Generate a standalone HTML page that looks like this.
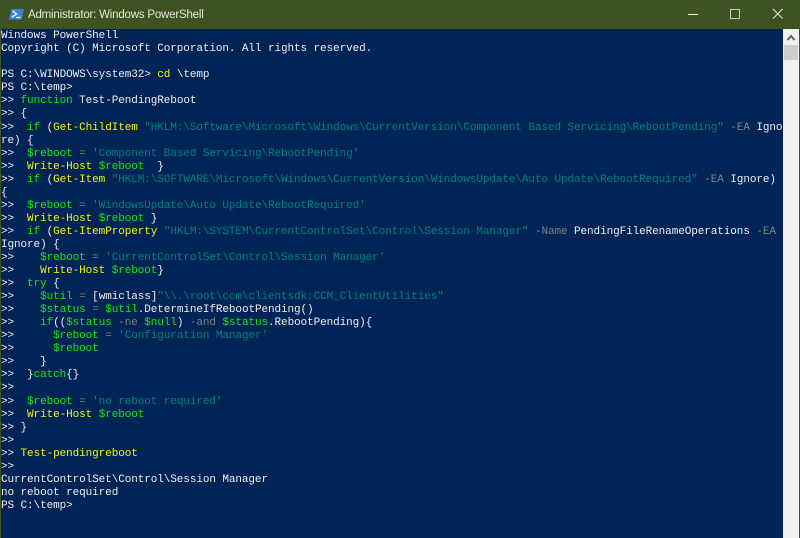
<!DOCTYPE html>
<html><head><meta charset="utf-8"><style>
html,body{margin:0;padding:0;width:800px;height:538px;overflow:hidden;background:#012456}
#tb{position:absolute;left:0;top:0;width:800px;height:29px;background:#3f5322}
#tt{position:absolute;left:28px;top:8px;font:11.500px/15px "Liberation Sans",sans-serif;letter-spacing:-.2px;color:#e4e8dc;white-space:pre}
#lb{position:absolute;left:0;top:29px;width:1px;height:509px;background:#3f5322}
#rb{position:absolute;left:799px;top:0;width:1px;height:538px;background:#3f5322}
#sb{position:absolute;left:783px;top:29px;width:16px;height:509px;background:#f0f0f0}
#th{position:absolute;left:784px;top:45px;width:14px;height:15px;background:#cdcdcd}
pre{position:absolute;left:1px;top:30.200px;margin:0;font:11px/13.040px "Liberation Mono",monospace;letter-spacing:-.09px;color:#eeedf0}
.y{color:#f4f400}.g{color:#10e810}.s{color:#008080}.o{color:#808080}
svg{position:absolute;left:0;top:0}
</style></head><body>
<pre>Windows PowerShell
Copyright (C) Microsoft Corporation. All rights reserved.

PS C:\WINDOWS\system32&gt; <span class="y">cd</span> \temp
PS C:\temp&gt;
&gt;&gt; <span class="g">function</span> Test-PendingReboot
&gt;&gt; {
&gt;&gt;  <span class="g">if</span> (<span class="y">Get-ChildItem</span> <span class="s">"HKLM:\Software\Microsoft\Windows\CurrentVersion\Component Based Servicing\RebootPending"</span> <span class="o">-EA</span> Igno
re) {
&gt;&gt;  <span class="g">$reboot</span> <span class="o">=</span> <span class="s">'Component Based Servicing\RebootPending'</span>
&gt;&gt;  <span class="y">Write-Host</span> <span class="g">$reboot</span>  }
&gt;&gt;  <span class="g">if</span> (<span class="y">Get-Item</span> <span class="s">"HKLM:\SOFTWARE\Microsoft\Windows\CurrentVersion\WindowsUpdate\Auto Update\RebootRequired"</span> <span class="o">-EA</span> Ignore)
{
&gt;&gt;  <span class="g">$reboot</span> <span class="o">=</span> <span class="s">'WindowsUpdate\Auto Update\RebootRequired'</span>
&gt;&gt;  <span class="y">Write-Host</span> <span class="g">$reboot</span> }
&gt;&gt;  <span class="g">if</span> (<span class="y">Get-ItemProperty</span> <span class="s">"HKLM:\SYSTEM\CurrentControlSet\Control\Session Manager"</span> <span class="o">-Name</span> PendingFileRenameOperations <span class="o">-EA</span>
Ignore) {
&gt;&gt;    <span class="g">$reboot</span> <span class="o">=</span> <span class="s">'CurrentControlSet\Control\Session Manager'</span>
&gt;&gt;    <span class="y">Write-Host</span> <span class="g">$reboot</span>}
&gt;&gt;  <span class="g">try</span> {
&gt;&gt;    <span class="g">$util</span> <span class="o">=</span> [wmiclass]<span class="s">"\\.\root\ccm\clientsdk:CCM_ClientUtilities"</span>
&gt;&gt;    <span class="g">$status</span> <span class="o">=</span> <span class="g">$util</span>.DetermineIfRebootPending()
&gt;&gt;    <span class="g">if</span>((<span class="g">$status</span> <span class="o">-ne</span> <span class="g">$null</span>) <span class="o">-and</span> <span class="g">$status</span>.RebootPending){
&gt;&gt;      <span class="g">$reboot</span> <span class="o">=</span> <span class="s">'Configuration Manager'</span>
&gt;&gt;      <span class="g">$reboot</span>
&gt;&gt;    }
&gt;&gt;  }<span class="g">catch</span>{}
&gt;&gt;
&gt;&gt;  <span class="g">$reboot</span> <span class="o">=</span> <span class="s">'no reboot required'</span>
&gt;&gt;  <span class="y">Write-Host</span> <span class="g">$reboot</span>
&gt;&gt; }
&gt;&gt;
&gt;&gt; <span class="y">Test-pendingreboot</span>
&gt;&gt;
CurrentControlSet\Control\Session Manager
no reboot required
PS C:\temp&gt;</pre>
<div id="tb"></div><div id="tt">Administrator: Windows PowerShell</div>
<div id="lb"></div><div id="rb"></div><div id="sb"></div><div id="th"></div>
<svg width="800" height="60" viewBox="0 0 800 60">
<path d="M11.500 9H24L21.500 19.500H9Z" fill="#3a85dc"/>
<path d="M12.500 10.800L16.500 14L11.800 17.200" fill="none" stroke="#fff" stroke-width="1.300"/>
<path d="M16 17.500H20.500" stroke="#fff" stroke-width="1.200"/>
<path d="M688 14.500H698" stroke="#f2f2f2" stroke-width="1"/>
<rect x="730.500" y="9.500" width="9" height="9" fill="none" stroke="#c8ccc0" stroke-width="1"/>
<path d="M773 9L782.500 18.500M782.500 9L773 18.500" stroke="#e8eae4" stroke-width="1"/>
<path d="M787.500 40L791 36L794.500 40" fill="none" stroke="#606060" stroke-width="2"/>
</svg>
</body></html>
